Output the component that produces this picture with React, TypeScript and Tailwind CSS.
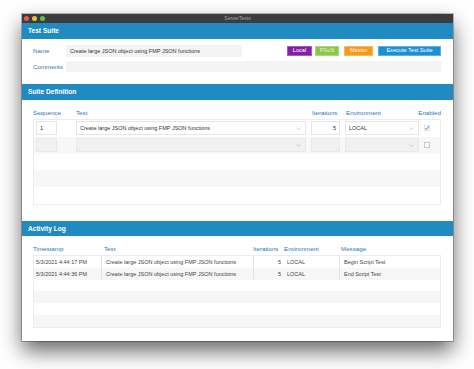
import React from "react";

const Chevron = () => (
  <svg width="5" height="3" viewBox="0 0 5 3" className="shrink-0">
    <path d="M0.5 0.5 L2.5 2.5 L4.5 0.5" fill="none" stroke="#b5b5b5" strokeWidth="0.7" />
  </svg>
);

const SectionHeader = ({ title, h }: { title: string; h: string }) => (
  <div className={`${h} bg-[#1f8bc1] flex items-center pl-[6px] text-white font-bold text-[6.6px]`}>{title}</div>
);

const longTest = "Create large JSON object using FMP JSON functions";

export default function App() {
  return (
    <div className="w-[474px] h-[369px] bg-white pt-[14px] pl-[22px] font-['Liberation_Sans',Arial,sans-serif] overflow-hidden">
      <div className="w-[431px] h-[327px] flex flex-col bg-white shadow-[0_0_0_1px_rgba(0,0,0,0.25),0_10px_20px_rgba(0,0,0,0.6)]">
        {/* title bar */}
        <div className="h-[9px] bg-[#3c3c3e] relative flex items-center justify-center">
          <div className="absolute left-[2px] top-[2px] flex gap-[3px]">
            <div className="w-[5px] h-[5px] rounded-full bg-[#ee5a52]" />
            <div className="w-[5px] h-[5px] rounded-full bg-[#f5bd3a]" />
            <div className="w-[5px] h-[5px] rounded-full bg-[#5fc24a]" />
          </div>
          <span className="text-[5px] text-[#a6a6a6] leading-none">ServerTests</span>
        </div>

        <SectionHeader title="Test Suite" h="h-[16px]" />
        <div className="h-[45px] pt-[6px] pl-[11px] pr-[12px] flex flex-col gap-[4px]">
          <div className="h-[12px] flex items-center">
            <div className="w-[33px] text-[6.2px] text-[#2c78b2]">Name</div>
            <div className="w-[176px] h-[12px] bg-[#f3f3f3] flex items-center pl-[4px] text-[5.5px] text-[#333]">{longTest}</div>
            <div className="ml-[45px] flex items-center text-[5.6px] leading-none">
              <div className="w-[25px] h-[10px] bg-[#861fa8] border border-[#a55ac0] text-white flex items-center justify-center">Local</div>
              <div className="ml-[3px] w-[24px] h-[10px] bg-[#89c848] border border-[#a9d983] text-[#eaf6dc] flex items-center justify-center">PSoS</div>
              <div className="ml-[5px] w-[29px] h-[10px] bg-[#f49b1c] border border-[#f6b860] text-[#fff3e0] flex items-center justify-center">Master</div>
              <div className="ml-[5px] w-[63px] h-[10px] bg-[#1b8fd4] border border-[#5db0e2] text-white flex items-center justify-center">Execute Test Suite</div>
            </div>
          </div>
          <div className="h-[11px] flex items-center">
            <div className="w-[33px] text-[6.2px] text-[#2c78b2]">Comments</div>
            <div className="flex-1 h-[11px] bg-[#f4f4f4]" />
          </div>
        </div>

        <SectionHeader title="Suite Definition" h="h-[16px]" />
        <div className="h-[121px] pt-[7px] pl-[11px] pr-[12px]">
          <div className="h-[12px] grid grid-cols-[41px_235px_34px_77px_21px] items-center text-[6.2px] text-[#2c78b2]">
            <div>Sequence</div>
            <div className="pl-[2px]">Test</div>
            <div className="pl-[3px]">Iterations</div>
            <div className="pl-[3px]">Environment</div>
            <div className="flex justify-end whitespace-nowrap">Enabled</div>
          </div>
          <div className="h-[86px] border border-[#ececec] flex flex-col">
            {[0, 1, 2, 3, 4].map((i) => {
              const stripe = i % 2 === 1 ? "bg-[#f7f7f7]" : "bg-white";
              const filled = i === 0;
              const cell = filled ? "bg-white border border-[#e6e6e6]" : "bg-[#f1f1f1] border border-[#e8e8e8]";
              return (
                <div key={i} className={`h-[17px] ${stripe} grid grid-cols-[41px_235px_34px_77px_21px] items-center text-[5.5px] text-[#333]`}>
                  {i < 2 ? (
                    <>
                      <div className="pl-[2px]">
                        <div className={`w-[21px] h-[14px] ${cell} flex items-center pl-[3px]`}>{filled ? "1" : ""}</div>
                      </div>
                      <div className="pl-[1px]">
                        <div className={`w-[230px] h-[14px] ${cell} flex items-center justify-between pl-[3px] pr-[4px]`}>
                          <span>{filled ? longTest : ""}</span>
                          <Chevron />
                        </div>
                      </div>
                      <div className="pl-[1px]">
                        <div className={`w-[29px] h-[14px] ${cell} flex items-center justify-end pr-[3px]`}>{filled ? "5" : ""}</div>
                      </div>
                      <div className="pl-[1px]">
                        <div className={`w-[74px] h-[14px] ${cell} flex items-center justify-between pl-[3px] pr-[4px]`}>
                          <span>{filled ? "LOCAL" : ""}</span>
                          <Chevron />
                        </div>
                      </div>
                      <div className="pl-[3px] flex items-center">
                        {filled ? (
                          <svg width="6" height="6" viewBox="0 0 6 6">
                            <rect x="0.25" y="0.25" width="5.5" height="5.5" fill="white" stroke="#cfcfcf" strokeWidth="0.5" />
                            <path d="M1.2 3 L2.5 4.4 L4.9 1" fill="none" stroke="#2f6ea8" strokeWidth="0.8" />
                          </svg>
                        ) : (
                          <div className="w-[6px] h-[6px] border border-[#c8c8c8] bg-white" />
                        )}
                      </div>
                    </>
                  ) : null}
                </div>
              );
            })}
          </div>
        </div>

        <SectionHeader title="Activity Log" h="h-[15px]" />
        <div className="h-[105px] pt-[6px] pl-[11px] pr-[12px]">
          <div className="h-[13px] grid grid-cols-[68px_152px_30px_56px_102px] items-center text-[6.2px] text-[#2c78b2]">
            <div>Timestamp</div>
            <div className="pl-[3px]">Test</div>
            <div>Iterations</div>
            <div className="pl-[1px]">Environment</div>
            <div className="pl-[2px]">Message</div>
          </div>
          <div className="h-[73px] border border-[#ececec] flex flex-col">
            {[
              ["5/3/2021 4:44:17 PM", longTest, "5", "LOCAL", "Begin Script Test"],
              ["5/3/2021 4:44:36 PM", longTest, "5", "LOCAL", "End Script Test"],
              null,
              null,
              null,
              null,
            ].map((r, i) => {
              const stripe = i % 2 === 1 ? "bg-[#f6f6f6]" : "bg-white";
              return (
                <div key={i} className={`h-[12px] ${stripe} grid grid-cols-[68px_152px_30px_56px_102px] items-center text-[5.5px] text-[#444]`}>
                  {r ? (
                    <>
                      <div className="h-full flex items-center pl-[2px] border-r border-[#e4e4e4]">{r[0]}</div>
                      <div className="h-full flex items-center pl-[4px] border-r border-[#e4e4e4]">{r[1]}</div>
                      <div className="h-full flex items-center justify-end pr-[3px]">{r[2]}</div>
                      <div className="h-full flex items-center pl-[3px] border-r border-[#e4e4e4]">{r[3]}</div>
                      <div className="h-full flex items-center pl-[4px]">{r[4]}</div>
                    </>
                  ) : null}
                </div>
              );
            })}
          </div>
        </div>
      </div>
    </div>
  );
}
